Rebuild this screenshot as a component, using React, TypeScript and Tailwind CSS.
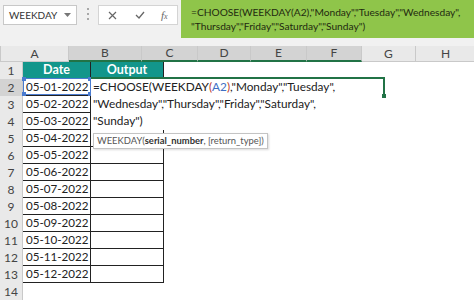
import React from 'react';

const cols = [
  { name: 'A', w: 68 },
  { name: 'B', w: 73 },
  { name: 'C', w: 56 },
  { name: 'D', w: 53 },
  { name: 'E', w: 56 },
  { name: 'F', w: 55 },
  { name: 'G', w: 54 },
  { name: 'H', w: 60 },
];

const dates = [
  '05-01-2022', '05-02-2022', '05-03-2022', '05-04-2022', '05-05-2022', '05-06-2022',
  '05-07-2022', '05-08-2022', '05-09-2022', '05-10-2022', '05-11-2022', '05-12-2022',
];

const App = () => {
  return (
    <div className="w-[474px] h-[301px] overflow-hidden bg-white text-[#222]" style={{ fontFamily: 'Lato, "Liberation Sans", sans-serif' }}>
      {/* Toolbar + formula bar */}
      <div className="h-[46px] bg-[#f1f1f1] flex items-start">
        <div className="mt-[5px] ml-[3px] w-[74px] h-[20px] bg-white border border-[#c8c8c8] flex items-center justify-between pl-[5px] pr-[5px]">
          <span className="text-[10px] text-[#333]">WEEKDAY</span>
          <svg width="7" height="4" viewBox="0 0 7 4"><path d="M0 0h7L3.5 4z" fill="#777" /></svg>
        </div>
        <div className="mt-[8px] ml-[9px] w-[3px] flex flex-col gap-[3px] items-center">
          <span className="w-[2px] h-[2px] bg-[#a8a8a8]" />
          <span className="w-[2px] h-[2px] bg-[#a8a8a8]" />
          <span className="w-[2px] h-[2px] bg-[#a8a8a8]" />
        </div>
        <div className="mt-[5px] ml-[9px] w-[80px] h-[20px] bg-white border border-[#d4d4d4] flex items-center">
          <svg className="ml-[9px]" width="9" height="9" viewBox="0 0 9 9"><path d="M1 1l7 7M8 1l-7 7" stroke="#666" strokeWidth="1.2" /></svg>
          <svg className="ml-[18px]" width="10" height="8" viewBox="0 0 10 8"><path d="M1 4l3 3 5-6" stroke="#666" strokeWidth="1.3" fill="none" /></svg>
          <span className="ml-[16px] text-[11px] italic text-[#666]" style={{ fontFamily: '"Liberation Serif", serif' }}>f<span className="text-[8px]">x</span></span>
        </div>
        <div className="ml-[3px] flex-1 h-[38px] bg-[#8fc54a] pl-[10px] pt-[5px] text-[10.2px] leading-[14px] text-[#1f2a10] whitespace-nowrap overflow-hidden">
          <div>=CHOOSE(WEEKDAY(A2),"Monday","Tuesday","Wednesday",</div>
          <div>"Thursday","Friday","Saturday","Sunday")</div>
        </div>
      </div>

      {/* Sheet */}
      <div className="relative">
        {/* column header row */}
        <div className="flex h-[16px]">
          <div className="w-[23px] h-full bg-[#e9e9e9] border-r border-b border-[#c9c9c9] relative">
            <svg className="absolute right-[3px] bottom-[2px]" width="9" height="9" viewBox="0 0 9 9"><path d="M9 0v9H0z" fill="#bdbdbd" /></svg>
          </div>
          {cols.map((c) => {
            const sel = ['B', 'C', 'D', 'E', 'F'].includes(c.name);
            return (
              <div
                key={c.name}
                style={{ width: c.w }}
                className={`shrink-0 h-full flex items-center justify-center text-[12px] text-[#444] border-r border-[#c9c9c9] ${sel ? 'bg-[#d3d3d3] border-b-2 border-b-[#217346]' : 'bg-[#e9e9e9] border-b border-b-[#c9c9c9]'}`}
              >
                {c.name}
              </div>
            );
          })}
        </div>

        {/* row 1 */}
        <div className="flex h-[17px]">
          <div className="w-[23px] shrink-0 bg-[#e9e9e9] border-r border-[#c9c9c9] flex items-center justify-center text-[12px] text-[#444]">1</div>
          <div className="w-[68px] shrink-0 bg-[#12968b] border-r border-b border-[#222] flex items-center justify-center text-[12.5px] font-bold text-white">Date</div>
          <div className="w-[73px] shrink-0 bg-[#12968b] border-r border-b border-[#222] flex items-center justify-center text-[12.5px] font-bold text-white">Output</div>
        </div>

        {dates.map((d, i) => (
          <div key={d} className="flex h-[17px]">
            <div className={`w-[23px] shrink-0 border-r border-[#c9c9c9] flex items-center justify-center text-[12px] text-[#444] ${i === 0 ? 'bg-[#d3d3d3]' : 'bg-[#e9e9e9]'}`}>{i + 2}</div>
            <div className="w-[68px] shrink-0 border-r border-b border-[#222] flex items-center pl-[3px] text-[11.6px] whitespace-nowrap">{d}</div>
            <div className="w-[73px] shrink-0 border-r border-b border-[#222]" />
          </div>
        ))}

        <div className="flex h-[17px]">
          <div className="w-[23px] shrink-0 bg-[#e9e9e9] border-r border-[#c9c9c9] flex items-center justify-center text-[12px] text-[#444]">14</div>
        </div>

        {/* A2 reference highlight */}
        <div className="absolute left-[23px] top-[32px] w-[68px] h-[17px] border border-[#4a7bd0]">
          <span className="absolute -left-[2px] -top-[2px] w-[4px] h-[4px] bg-[#4a7bd0]" />
          <span className="absolute -right-[2px] -top-[2px] w-[4px] h-[4px] bg-[#4a7bd0]" />
          <span className="absolute -left-[2px] -bottom-[2px] w-[4px] h-[4px] bg-[#4a7bd0]" />
          <span className="absolute -right-[2px] -bottom-[2px] w-[4px] h-[4px] bg-[#4a7bd0]" />
        </div>

        {/* in-cell editor */}
        <div className="absolute left-[91px] top-[32px] w-[293px] h-[52px] bg-white pl-[2px] text-[11.8px] leading-[17px] whitespace-nowrap">
          <div>=CHOOSE(WEEKDAY<span className="text-[#c0392b]">(</span><span className="text-[#3f6fc4]">A2</span><span className="text-[#c0392b]">)</span>,"Monday","Tuesday",</div>
          <div>"Wednesday","Thursday","Friday","Saturday",</div>
          <div>"Sunday")</div>
        </div>
        <div className="absolute left-[91px] top-[31px] w-[294px] h-[19px] border-t-2 border-r-2 border-[#217346]" />
        <span className="absolute left-[382px] top-[48px] w-[4px] h-[4px] bg-[#217346]" />

        {/* tooltip */}
        <div className="absolute left-[93px] top-[87px] h-[16px] px-[3px] bg-white border border-[#c4c4c4] shadow-[1px_1px_2px_rgba(0,0,0,0.15)] flex items-center text-[9.4px] text-[#555] whitespace-nowrap">
          WEEKDAY(<span className="font-bold text-[#333]">serial_number</span>, [return_type])
        </div>
      </div>
    </div>
  );
};

export default App;
